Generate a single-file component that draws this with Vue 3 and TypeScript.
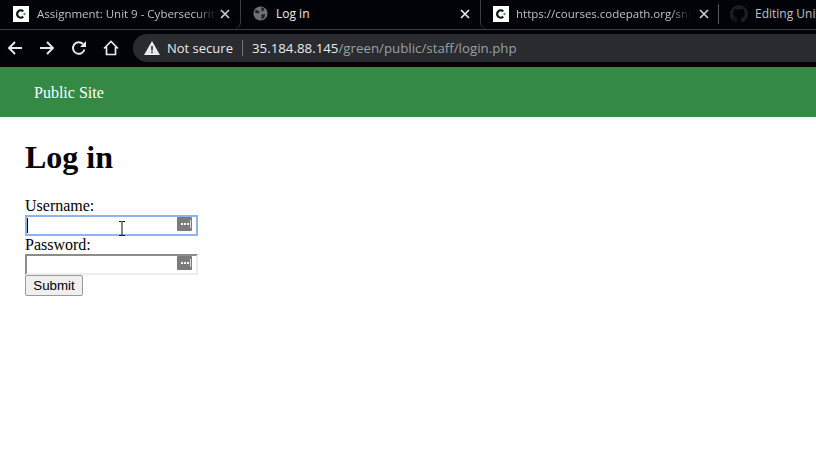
<script setup lang="ts">
const tabs = [
  { title: 'Assignment: Unit 9 - Cybersecurity', icon: 'c', cls: 'one' },
  { title: 'Log in', icon: 'globe', cls: 'two' },
  { title: 'https://courses.codepath.org/snippets', icon: 'c', cls: 'three' },
]
</script>

<template>
  <div class="page">
    <div class="chrome">
      <div class="tabstrip">
        <div v-for="t in tabs" :key="t.cls" class="tab" :class="t.cls">
          <span v-if="t.icon === 'c'" class="cfav">
            <svg width="16" height="16" viewBox="0 0 16 16">
              <rect width="16" height="16" fill="#fff" />
              <path d="M10.2 5.4A3.6 3.6 0 1 0 10.2 10.6" fill="none" stroke="#111" stroke-width="2.2" />
              <circle cx="11.5" cy="8" r="1.2" fill="#3f9f78" />
            </svg>
          </span>
          <svg v-else class="globe" width="15" height="15" viewBox="0 0 16 16">
            <circle cx="8" cy="8" r="7.500" fill="#6d7074" />
            <path d="M3 4l3 1 1 2-2 1-3-1zM9 1.500l3 1-1 3-2 0zM9 9l4-.5-1 4-3 1.500z" fill="#202124" />
          </svg>
          <span class="title">{{ t.title }}</span>
          <svg class="close" width="10" height="10" viewBox="0 0 10 10">
            <path d="M1 1l8 8M9 1l-8 8" stroke="currentColor" stroke-width="1.700" />
          </svg>
        </div>
        <div class="tab four">
          <svg class="gh" width="18" height="18" viewBox="0 0 16 16">
            <path fill="#1c1d1f" d="M8 0a8 8 0 0 0-2.500 15.600c.4.1.5-.2.5-.4v-1.400c-2.200.5-2.700-1-2.700-1-.4-.9-.9-1.200-.9-1.200-.7-.5.1-.5.1-.5.800.1 1.200.8 1.200.8.700 1.200 1.900.9 2.300.7.1-.5.3-.9.500-1.100-1.800-.2-3.600-.9-3.600-4 0-.9.300-1.600.8-2.100-.1-.2-.4-1 .1-2.100 0 0 .7-.2 2.200.8a7.600 7.600 0 0 1 4 0c1.500-1 2.200-.8 2.200-.8.500 1.100.2 1.900.1 2.100.5.500.8 1.200.8 2.100 0 3.100-1.900 3.800-3.700 4 .3.300.6.800.6 1.500v2.200c0 .2.100.5.500.4A8 8 0 0 0 8 0z" />
          </svg>
          <span class="title-plain">Editing Unit</span>
        </div>
      </div>
      <div class="toolbar">
        <div class="navs">
          <svg width="16" height="16" viewBox="0 0 16 16"><path d="M15 8H2M8 2L2 8l6 6" fill="none" stroke="#e8eaed" stroke-width="1.900" /></svg>
          <svg width="16" height="16" viewBox="0 0 16 16"><path d="M1 8h13M8 2l6 6-6 6" fill="none" stroke="#e8eaed" stroke-width="1.900" /></svg>
          <svg width="16" height="16" viewBox="0 0 16 16"><path d="M13.400 9.500A5.800 5.800 0 1 1 12 4" fill="none" stroke="#e8eaed" stroke-width="1.900" /><path d="M15 1v6H9z" fill="#e8eaed" /></svg>
          <svg width="16" height="16" viewBox="0 0 16 16"><path d="M1 8.500L8 1.500l7 7M3.500 7v7.500h9V7" fill="none" stroke="#e8eaed" stroke-width="1.700" /></svg>
        </div>
        <div class="omnibox">
          <svg class="warn" width="16" height="14" viewBox="0 0 16 14">
            <path d="M8 0l8 14H0z" fill="#e8eaed" />
            <path d="M7.200 5h1.600v4.500H7.200zM7.200 10.500h1.600V12H7.200z" fill="#292b2e" />
          </svg>
          <span class="secure">Not secure</span>
          <span class="divider"></span>
          <span class="url"><span class="host">35.184.88.145</span><span class="path">/green/public/staff/login.php</span></span>
        </div>
      </div>
    </div>

    <nav class="site-nav"><a class="site-link">Public Site</a></nav>

    <main class="content">
      <h1>Log in</h1>
      <form class="login" @submit.prevent>
        <label for="u">Username:</label>
        <span class="field focused">
          <span class="caret"></span>
          <span class="key"><i></i><i></i><i></i><b></b></span>
          <svg class="ibeam" width="8" height="15" viewBox="0 0 8 15"><path d="M1 .5h2.500L4 1l.5-.5H7M4 1v13M1 14.500h2.500L4 14l.5.500H7" fill="none" stroke="#111" /></svg>
        </span>
        <label for="p">Password:</label>
        <span class="field">
          <span class="key"><i></i><i></i><i></i><b></b></span>
        </span>
        <button type="button" class="submit">Submit</button>
      </form>
    </main>
  </div>
</template>

<style>
html, body { margin: 0; background: #fff; }
</style>

<style scoped>
.page { width: 816px; height: 463px; overflow: hidden; background: #fff; font-family: "Liberation Serif", serif; font-size: 16px; color: #000; }
.chrome { height: 67px; background: #020308; font-family: "Open Sans", "Noto Sans", sans-serif; }
.tabstrip { height: 29px; display: flex; border-bottom: 1px solid #3b3d40; box-sizing: content-box; overflow: hidden; }
.tab { position: relative; height: 29px; box-sizing: border-box; display: flex; align-items: center; padding-bottom: 2px; color: #bdc1c6; font-size: 11.500px; flex: none; }
.one { width: 241px; padding-left: 13px; border-right: 1px solid #3b3d40; border-bottom-right-radius: 7px; }
.two { width: 239px; padding-left: 12px; background: #020308; color: #e8eaed; font-size: 12px; height: 30px; padding-bottom: 3px; }
.three { width: 239px; padding-left: 12px; border-left: 1px solid #3b3d40; border-bottom-left-radius: 7px; }
.four { width: 97px; padding-left: 11px; font-size: 12px; }
.four::before { content: ""; position: absolute; left: -1px; top: 4px; height: 20px; width: 1px; background: #55575a; }
.cfav { width: 16px; height: 16px; flex: none; display: block; }
.cfav svg, .globe, .gh { display: block; flex: none; }
.title { overflow: hidden; white-space: nowrap; flex: none; -webkit-mask-image: linear-gradient(to right, #000 88%, transparent); mask-image: linear-gradient(to right, #000 88%, transparent); }
.one .title { margin-left: 8px; width: 180px; }
.two .title { margin-left: 8px; width: 184px; -webkit-mask-image: none; mask-image: none; }
.three .title { margin-left: 7px; width: 175px; }
.close { flex: none; color: #c9ccd0; margin-left: 3px; }
.two .close { margin-left: 0; color: #e8eaed; }
.three .close { margin-left: 8px; }
.title-plain { margin-left: 7px; white-space: nowrap; }
.toolbar { height: 37px; display: flex; align-items: center; padding-bottom: 1px; box-sizing: border-box; }
.navs { width: 133px; flex: none; display: flex; align-items: center; gap: 16px; padding-left: 7px; box-sizing: border-box; }
.omnibox { flex: 1; height: 28px; background: #292b2e; border-radius: 14px 0 0 14px; display: flex; align-items: center; padding-left: 11px; white-space: nowrap; }
.warn { flex: none; }
.secure { color: #e8eaed; font-size: 13px; margin-left: 7px; }
.divider { width: 1px; height: 16px; background: #70757a; margin: 0 9px 0 9px; flex: none; }
.url { font-size: 13.300px; }
.host { color: #e8eaed; }
.path { color: #9aa0a6; }
.site-nav { height: 50px; background: #348a45; display: flex; align-items: center; padding-left: 34px; padding-top: 2px; box-sizing: border-box; }
.site-link { color: #fff; font-size: 16px; }
.content { padding-left: 25px; }
h1 { margin: 22px 0 21px; font-size: 32px; line-height: 37px; font-weight: bold; }
.login { display: flex; flex-direction: column; align-items: flex-start; }
label { line-height: 18px; height: 18px; }
.field { position: relative; display: block; box-sizing: border-box; width: 173px; height: 21px; border: 2px solid; border-color: #8c8c8c #ececec #ececec #8c8c8c; background: #fff; }
.field.focused { border-color: #8fb3ee; }
.caret { position: absolute; left: 0; top: 1px; width: 1px; height: 15px; background: #000; }
.key { position: absolute; right: 4px; top: 0; width: 15px; height: 14px; background: #7b7b7b; border-radius: 1px; display: flex; align-items: center; gap: 1px; padding-left: 4px; box-sizing: border-box; }
.key i { width: 2px; height: 2px; background: #fff; display: block; }
.key b { position: absolute; right: 1px; top: 3px; width: 1px; height: 8px; background: #dcdcdc; }
.ibeam { position: absolute; left: 91px; top: 4px; }
.submit { box-sizing: border-box; width: 58px; height: 21px; padding: 0; margin: 0; font-family: "Liberation Sans", sans-serif; font-size: 13.333px; color: #000; background: #efefef; border: 1px solid #9a9a9a; border-radius: 2px; }
</style>
